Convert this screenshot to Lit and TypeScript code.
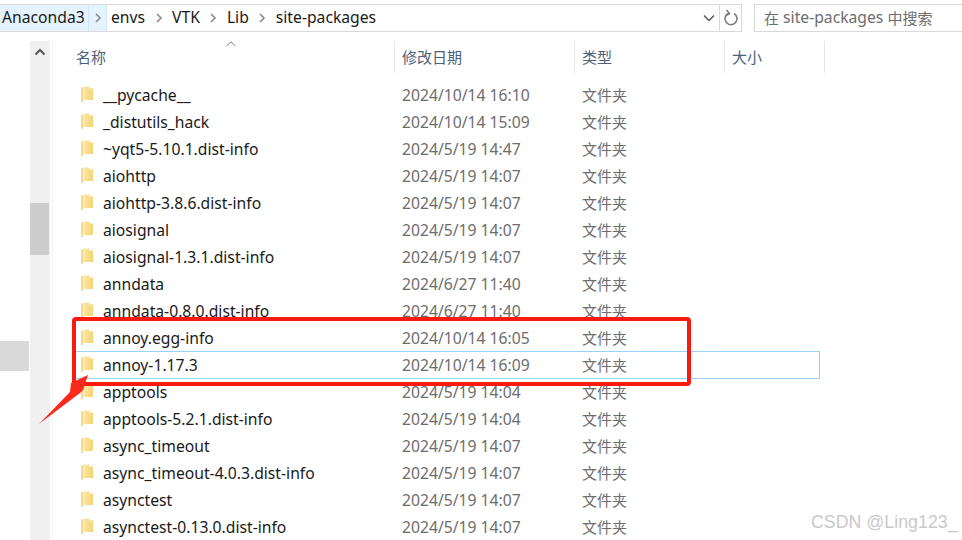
import { LitElement, html, css, svg } from "lit";
import { customElement } from "lit/decorators.js";

const ROWS: [string, string][] = [
  ["__pycache__", "2024/10/14 16:10"],
  ["_distutils_hack", "2024/10/14 15:09"],
  ["~yqt5-5.10.1.dist-info", "2024/5/19 14:47"],
  ["aiohttp", "2024/5/19 14:07"],
  ["aiohttp-3.8.6.dist-info", "2024/5/19 14:07"],
  ["aiosignal", "2024/5/19 14:07"],
  ["aiosignal-1.3.1.dist-info", "2024/5/19 14:07"],
  ["anndata", "2024/6/27 11:40"],
  ["anndata-0.8.0.dist-info", "2024/6/27 11:40"],
  ["annoy.egg-info", "2024/10/14 16:05"],
  ["annoy-1.17.3", "2024/10/14 16:09"],
  ["apptools", "2024/5/19 14:04"],
  ["apptools-5.2.1.dist-info", "2024/5/19 14:04"],
  ["async_timeout", "2024/5/19 14:07"],
  ["async_timeout-4.0.3.dist-info", "2024/5/19 14:07"],
  ["asynctest", "2024/5/19 14:07"],
  ["asynctest-0.13.0.dist-info", "2024/5/19 14:07"],
];

const folder = svg`<svg class="folder" viewBox="0 0 12 17" width="12" height="17">
  <defs><linearGradient id="fg" x1="0" y1="0" x2="1" y2="0.2">
    <stop offset="0" stop-color="#fbe7a3"/><stop offset="1" stop-color="#f6d576"/></linearGradient></defs>
  <path d="M3 0.5 L8 0.5 L8.5 2.5 L12 2.5 L12 14 L3 14 Z" fill="url(#fg)"/>
  <path d="M0.5 1.5 L3.5 0.5 L3.5 14 L0.5 16.5 Z" fill="#fbeebb"/>
  <path d="M0.5 1.5 L0.5 16.5 L1.5 15.7 L1.5 1.2 Z" fill="#eec063"/>
</svg>`;

@customElement("app-root")
export class AppRoot extends LitElement {
  static styles = css`
    :host {
      display: block;
      position: relative;
      width: 962px;
      height: 540px;
      overflow: hidden;
      background: #fff;
      font-family: "Noto Sans", "Noto Sans CJK SC", sans-serif;
      font-size: 15.7px;
      color: #1a1a1a;
    }
    .bar {
      display: flex;
      align-items: stretch;
      padding-top: 4px;
      height: 28px;
    }
    .address {
      width: 742px;
      box-sizing: border-box;
      display: flex;
      align-items: center;
      border: solid #d9d9d9;
      border-width: 1px 1px 1px 0;
      height: 28px;
    }
    .crumb { padding-bottom: 3px; white-space: nowrap; }
    .crumb.first {
      background: #e5f3ff;
      align-self: stretch;
      display: flex;
      align-items: center;
      padding-left: 2px;
      width: 86px;
      box-sizing: content-box;
      border-right: 1px solid #cce8ff;
    }
    .sep {
      width: 27px;
      display: flex;
      justify-content: center;
      align-items: center;
    }
    .sep.first {
      width: 17px;
      align-self: stretch;
      background: #e5f3ff;
      border-right: 1px solid #cce8ff;
      margin-right: 4px;
    }
    .spacer { flex: 1; }
    .drop {
      width: 20px;
      display: flex;
      justify-content: center;
      align-items: center;
    }
    .refresh {
      width: 21px;
      align-self: stretch;
      border-left: 1px solid #d9d9d9;
      display: flex;
      justify-content: center;
      align-items: center;
    }
    .search {
      margin-left: 12px;
      flex: 1;
      height: 28px;
      box-sizing: border-box;
      border: 1px solid #d9d9d9;
      border-right: 0;
      color: #6d6d6d;
      padding: 0 0 2px 9px;
      display: flex;
      align-items: center;
      white-space: pre;
    }
    .cjk { font-size: 15px; }
    .main {
      display: flex;
      margin-top: 9px;
      height: 499px;
    }
    .nav {
      width: 30px;
      padding-top: 300px;
      box-sizing: border-box;
    }
    .nav-sel {
      width: 29px;
      height: 30px;
      background: #d9d9d9;
    }
    .scroll {
      width: 20px;
      background: #f0f0f0;
      box-sizing: border-box;
      padding-top: 162px;
      position: relative;
    }
    .thumb {
      width: 19px;
      height: 52px;
      background: #cdcdcd;
    }
    .up {
      position: absolute;
      left: 4px;
      top: 7px;
    }
    .list {
      flex: 1;
      min-width: 0;
      margin-left: 2px;
      border-left: 1px solid #f3f3f3;
    }
    .head {
      height: 32px;
      display: grid;
      grid-template-columns: 342px 180px 150px 100px;
      position: relative;
    }
    .hc {
      padding: 0 0 2px 7px;
      border-right: 1px solid #e5e5e5;
      color: #4c607a;
      font-size: 15px;
      display: flex;
      align-items: center;
      box-sizing: border-box;
    }
    .hc.name { padding-left: 23px; }
    .sort {
      position: absolute;
      left: 173px;
      top: 0px;
    }
    .rows {
      margin: 8px 0 0 22px;
    }
    .row {
      height: 27px;
      box-sizing: border-box;
      display: grid;
      grid-template-columns: 327px 180px 1fr;
      align-items: center;
      width: 745px;
    }
    .row.sel {
      height: 28px;
      margin-bottom: -1px;
      padding-bottom: 1px;
      outline: 1px solid #99d1ff;
      outline-offset: -1px;
    }
    .n {
      display: flex;
      align-items: center;
      padding-left: 6px;
      gap: 10px;
      white-space: nowrap;
    }
    .folder { flex: none; margin-bottom: 1px; }
    .d, .t { color: #6d6d6d; }
    .t { font-size: 15px; }
    .mark {
      position: absolute;
      left: 72px;
      top: 317px;
      width: 619px;
      height: 69px;
      box-sizing: border-box;
      border: 4.5px solid #fb1a10;
      border-radius: 4px;
    }
    .arrow {
      position: absolute;
      left: 36px;
      top: 372px;
    }
    .wm {
      position: absolute;
      left: 811px;
      top: 512px;
      font-family: "Liberation Sans", sans-serif;
      font-size: 17.8px;
      color: #c9c9c9;
      white-space: nowrap;
    }
  `;

  render() {
    const chev = html`<svg width="8" height="12" viewBox="0 0 8 12"><path d="M2 2 L6 6 L2 10" fill="none" stroke="#8a8a8a" stroke-width="1.6"/></svg>`;
    return html`
      <div class="bar">
        <div class="address">
          <span class="crumb first">Anaconda3</span>
          <span class="sep first">${chev}</span>
          <span class="crumb">envs</span><span class="sep">${chev}</span>
          <span class="crumb">VTK</span><span class="sep">${chev}</span>
          <span class="crumb">Lib</span><span class="sep">${chev}</span>
          <span class="crumb">site-packages</span>
          <span class="spacer"></span>
          <span class="drop"><svg width="12" height="8" viewBox="0 0 12 8"><path d="M1 1.5 L6 6.5 L11 1.5" fill="none" stroke="#555" stroke-width="1.5"/></svg></span>
          <span class="refresh"><svg width="16" height="18" viewBox="0 0 16 18"><path d="M5 4.5 A6 6 0 1 0 11 4.5" fill="none" stroke="#7a7a7a" stroke-width="1.6"/><path d="M3.5 1 L6.5 4.5 L3 6.5" fill="none" stroke="#7a7a7a" stroke-width="1.5"/></svg></span>
        </div>
        <div class="search"><span class="cjk">在</span> site-packages <span class="cjk">中搜索</span></div>
      </div>
      <div class="main">
        <div class="nav"><div class="nav-sel"></div></div>
        <div class="scroll">
          <svg class="up" width="12" height="8" viewBox="0 0 12 8"><path d="M1.5 6.5 L6 2 L10.5 6.5" fill="none" stroke="#555" stroke-width="2"/></svg>
          <div class="thumb"></div>
        </div>
        <div class="list">
          <div class="head">
            <div class="hc name">名称</div>
            <div class="hc">修改日期</div>
            <div class="hc">类型</div>
            <div class="hc">大小</div>
            <svg class="sort" width="10" height="6" viewBox="0 0 10 6"><path d="M0.5 5 L5 0.8 L9.5 5" fill="none" stroke="#7a7a7a"/></svg>
          </div>
          <div class="rows">
            ${ROWS.map(([n, d], i) => html`
              <div class="row ${i === 10 ? "sel" : ""}">
                <div class="n">${folder}<span>${n}</span></div>
                <div class="d">${d}</div>
                <div class="t">文件夹</div>
              </div>`)}
          </div>
        </div>
      </div>
      <div class="mark"></div>
      <svg class="arrow" width="56" height="56" viewBox="0 0 56 56">
        <path d="M3 52 L34 20 L35 11 L52 3 L47 18 L44 21 Z" fill="#fb2a1c"/>
      </svg>
      <div class="wm">CSDN @Ling123_</div>
    `;
  }
}
